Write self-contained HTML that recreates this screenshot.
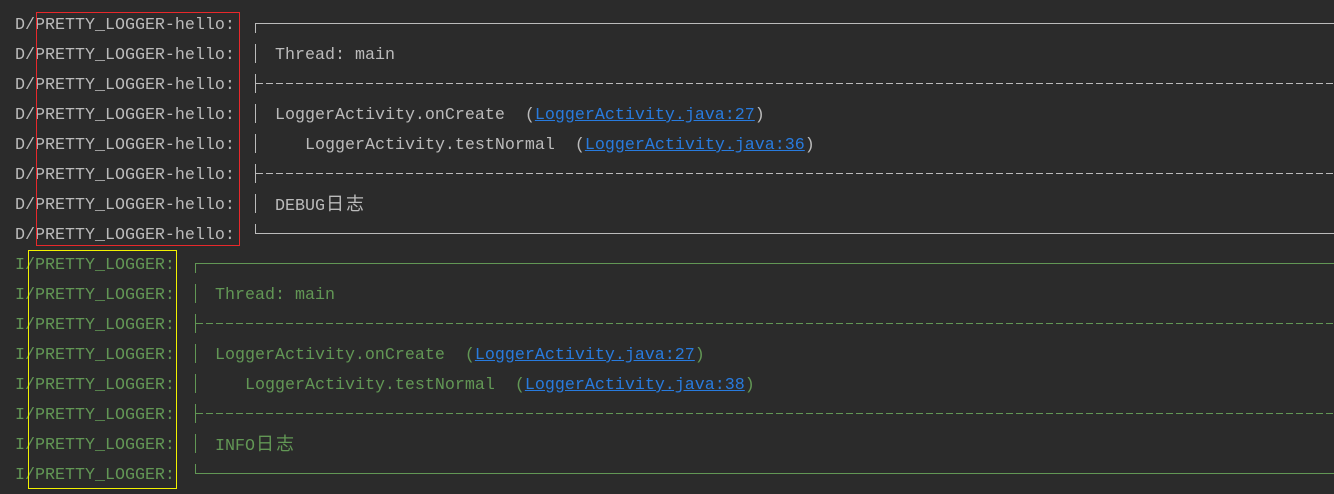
<!DOCTYPE html>
<html><head><meta charset="utf-8"><style>
html,body{margin:0;padding:0;background:#2b2b2b;width:1334px;height:494px;overflow:hidden;position:relative}
.t{position:absolute;font-family:"Liberation Mono","Noto Sans CJK SC",monospace;font-size:16.67px;line-height:30px;white-space:pre;margin-top:2px}
.d{color:#bbbbbb}.i{color:#629755}
a{color:#287bde;text-decoration:underline}
.c{display:inline-block;width:20px;text-align:center;font-size:18px}
.l{position:absolute}
.dg{background:#bbbbbb}.ig{background:#629755}
.dash{position:absolute;height:1px}
.dd{background:repeating-linear-gradient(90deg,#bbbbbb 0 7px,transparent 7px 10px)}
.id{background:repeating-linear-gradient(90deg,#629755 0 7px,transparent 7px 10px)}
</style></head><body>
<div class="t d" style="left:15px;top:9px">D/PRETTY_LOGGER-hello:</div>
<div class="t d" style="left:15px;top:39px">D/PRETTY_LOGGER-hello:</div>
<div class="t d" style="left:15px;top:69px">D/PRETTY_LOGGER-hello:</div>
<div class="t d" style="left:15px;top:99px">D/PRETTY_LOGGER-hello:</div>
<div class="t d" style="left:15px;top:129px">D/PRETTY_LOGGER-hello:</div>
<div class="t d" style="left:15px;top:159px">D/PRETTY_LOGGER-hello:</div>
<div class="t d" style="left:15px;top:189px">D/PRETTY_LOGGER-hello:</div>
<div class="t d" style="left:15px;top:219px">D/PRETTY_LOGGER-hello:</div>
<div class="l dg" style="left:255px;top:23px;width:1079px;height:1px"></div>
<div class="l dg" style="left:255px;top:23px;width:1px;height:10px"></div>
<div class="l dg" style="left:255px;top:44px;width:1px;height:19px"></div>
<div class="l dg" style="left:255px;top:74px;width:1px;height:19px"></div>
<div class="dash dd" style="left:256px;top:83px;width:1078px"></div>
<div class="l dg" style="left:255px;top:104px;width:1px;height:19px"></div>
<div class="l dg" style="left:255px;top:134px;width:1px;height:19px"></div>
<div class="l dg" style="left:255px;top:164px;width:1px;height:19px"></div>
<div class="dash dd" style="left:256px;top:173px;width:1078px"></div>
<div class="l dg" style="left:255px;top:194px;width:1px;height:19px"></div>
<div class="l dg" style="left:255px;top:224px;width:1px;height:10px"></div>
<div class="l dg" style="left:255px;top:233px;width:1079px;height:1px"></div>
<div class="t d" style="left:275px;top:39px">Thread: main</div>
<div class="t d" style="left:275px;top:99px">LoggerActivity.onCreate  (<a>LoggerActivity.java:27</a>)</div>
<div class="t d" style="left:305px;top:129px">LoggerActivity.testNormal  (<a>LoggerActivity.java:36</a>)</div>
<div class="t d" style="left:275px;top:189px">DEBUG<span class="c">日</span><span class="c">志</span></div>
<div class="l" style="left:36px;top:12px;width:202px;height:232px;border:1px solid #e8282b"></div>
<div class="t i" style="left:15px;top:249px">I/PRETTY_LOGGER:</div>
<div class="t i" style="left:15px;top:279px">I/PRETTY_LOGGER:</div>
<div class="t i" style="left:15px;top:309px">I/PRETTY_LOGGER:</div>
<div class="t i" style="left:15px;top:339px">I/PRETTY_LOGGER:</div>
<div class="t i" style="left:15px;top:369px">I/PRETTY_LOGGER:</div>
<div class="t i" style="left:15px;top:399px">I/PRETTY_LOGGER:</div>
<div class="t i" style="left:15px;top:429px">I/PRETTY_LOGGER:</div>
<div class="t i" style="left:15px;top:459px">I/PRETTY_LOGGER:</div>
<div class="l ig" style="left:195px;top:263px;width:1139px;height:1px"></div>
<div class="l ig" style="left:195px;top:263px;width:1px;height:10px"></div>
<div class="l ig" style="left:195px;top:284px;width:1px;height:19px"></div>
<div class="l ig" style="left:195px;top:314px;width:1px;height:19px"></div>
<div class="dash id" style="left:196px;top:323px;width:1138px"></div>
<div class="l ig" style="left:195px;top:344px;width:1px;height:19px"></div>
<div class="l ig" style="left:195px;top:374px;width:1px;height:19px"></div>
<div class="l ig" style="left:195px;top:404px;width:1px;height:19px"></div>
<div class="dash id" style="left:196px;top:413px;width:1138px"></div>
<div class="l ig" style="left:195px;top:434px;width:1px;height:19px"></div>
<div class="l ig" style="left:195px;top:464px;width:1px;height:10px"></div>
<div class="l ig" style="left:195px;top:473px;width:1139px;height:1px"></div>
<div class="t i" style="left:215px;top:279px">Thread: main</div>
<div class="t i" style="left:215px;top:339px">LoggerActivity.onCreate  (<a>LoggerActivity.java:27</a>)</div>
<div class="t i" style="left:245px;top:369px">LoggerActivity.testNormal  (<a>LoggerActivity.java:38</a>)</div>
<div class="t i" style="left:215px;top:429px">INFO<span class="c">日</span><span class="c">志</span></div>
<div class="l" style="left:28px;top:250px;width:147px;height:237px;border:1px solid #f2f200"></div>
</body></html>
